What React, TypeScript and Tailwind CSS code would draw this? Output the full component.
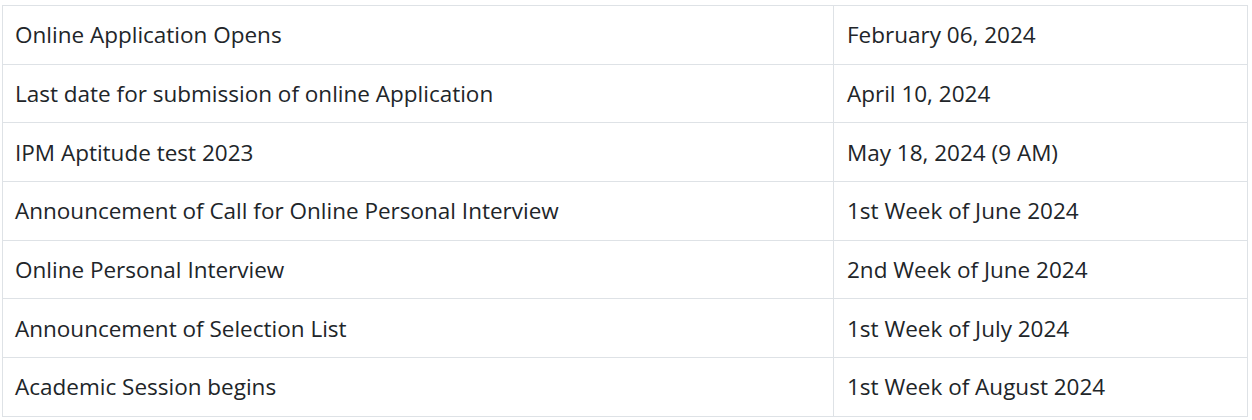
const rows: [string, string][] = [
  ['Online Application Opens', 'February 06, 2024'],
  ['Last date for submission of online Application', 'April 10, 2024'],
  ['IPM Aptitude test 2023', 'May 18, 2024 (9 AM)'],
  ['Announcement of Call for Online Personal Interview', '1st Week of June 2024'],
  ['Online Personal Interview', '2nd Week of June 2024'],
  ['Announcement of Selection List', '1st Week of July 2024'],
  ['Academic Session begins', '1st Week of August 2024'],
];

export default function App() {
  return (
    <div className="bg-white w-[1252px] h-[420px] pt-[5px] pl-[2px] font-['Open_Sans',sans-serif] text-[#212529]">
      <table className="w-[1246px] border-collapse table-fixed">
        <tbody>
          {rows.map(([event, date]) => (
            <tr key={event} className="h-[58.7px]">
              <td className="w-[831px] border border-[#dee2e6] px-[12px] text-[22.5px] leading-[33px] align-middle">
                {event}
              </td>
              <td className="border border-[#dee2e6] px-[13px] text-[22.5px] leading-[33px] align-middle">
                {date}
              </td>
            </tr>
          ))}
        </tbody>
      </table>
    </div>
  );
}
